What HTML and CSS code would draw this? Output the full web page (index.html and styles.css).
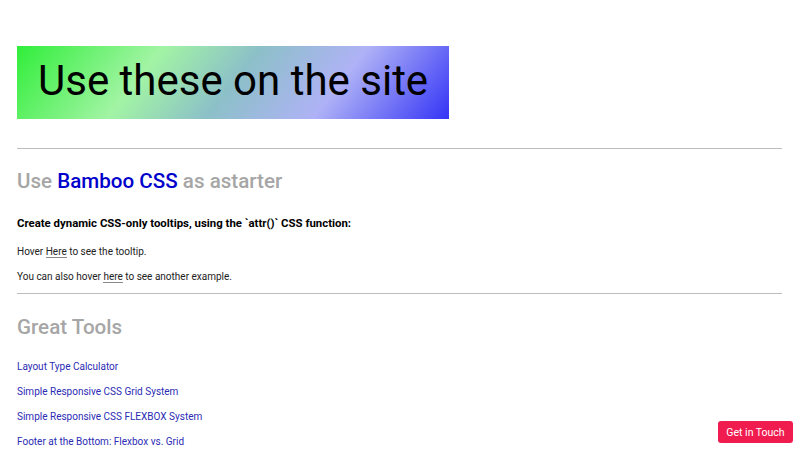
FILE: index.html
```html
<!DOCTYPE html>
<html>
<head>
<meta charset="utf-8">
<link rel="stylesheet" href="styles.css">
</head>
<body>
<main class="page">
  <div class="banner"><h1 class="banner-title">Use these on the site</h1></div>
  <hr class="rule rule-first">
  <h2 class="section-title">Use <a class="title-link" href="#">Bamboo CSS</a> as astarter</h2>
  <h3 class="subtitle">Create dynamic CSS-only tooltips, using the `attr()` CSS function:</h3>
  <p class="text">Hover <span class="tip">Here</span> to see the tooltip.</p>
  <p class="text text-second">You can also hover <span class="tip">here</span> to see another example.</p>
  <hr class="rule rule-second">
  <h2 class="section-title tools-title">Great Tools</h2>
  <ul class="tools">
    <li><a class="tool-link" href="#">Layout Type Calculator</a></li>
    <li><a class="tool-link" href="#">Simple Responsive CSS Grid System</a></li>
    <li><a class="tool-link" href="#">Simple Responsive CSS FLEXBOX System</a></li>
    <li><a class="tool-link" href="#">Footer at the Bottom: Flexbox vs. Grid</a></li>
  </ul>
</main>
<a class="contact" href="#">Get in Touch</a>
</body>
</html>
```
FILE: styles.css
```css
html, body {
  margin: 0;
  padding: 0;
  background: #fff;
}
body {
  font-family: Roboto, "Liberation Sans", sans-serif;
  color: #111;
  overflow: hidden;
}
.page {
  padding: 46px 18px 0 17px;
}
.banner {
  width: 432px;
  height: 73px;
  box-sizing: border-box;
  padding-left: 21px;
  display: flex;
  align-items: center;
  background: linear-gradient(128deg, #30ee3a 0%, #a2f4a4 30%, #8cc0c8 50%, #afb2f6 72%, #3434f6 100%);
}
.banner-title {
  margin: 0 0 3px;
  font-size: 42px;
  font-weight: 400;
  line-height: 1;
  color: #000;
}
.rule {
  border: 0;
  height: 1px;
  background: #bdbdbd;
  margin: 0;
}
.rule-first { margin-top: 29px; }
.section-title {
  margin: 19px 0 0;
  font-size: 20.6px;
  line-height: 26px;
  font-weight: 500;
  color: #a6a6a6;
}
.title-link {
  color: #0000cc;
  text-decoration: none;
}
.subtitle {
  margin: 20px 0 0;
  font-size: 11.4px;
  line-height: 18px;
  font-weight: 700;
  color: #000;
}
.text {
  margin: 12px 0 0;
  font-size: 10px;
  line-height: 16px;
  color: #222;
}
.text-second { margin-top: 9px; }
.tip {
  border-bottom: 1px solid #888;
}
.rule-second { margin-top: 8px; }
.tools-title { margin-top: 20px; }
.tools {
  list-style: none;
  margin: 19px 0 0;
  padding: 0;
  display: flex;
  flex-direction: column;
  gap: 9px;
}
.tools li {
  font-size: 10px;
  line-height: 16px;
}
.tool-link {
  color: #2b2bb3;
  text-decoration: none;
}
.contact {
  position: fixed;
  right: 7px;
  bottom: 7px;
  width: 75px;
  height: 22px;
  display: flex;
  align-items: center;
  justify-content: center;
  background: #f01c50;
  color: #fff;
  font-size: 10.5px;
  border-radius: 3px;
  text-decoration: none;
}
```
